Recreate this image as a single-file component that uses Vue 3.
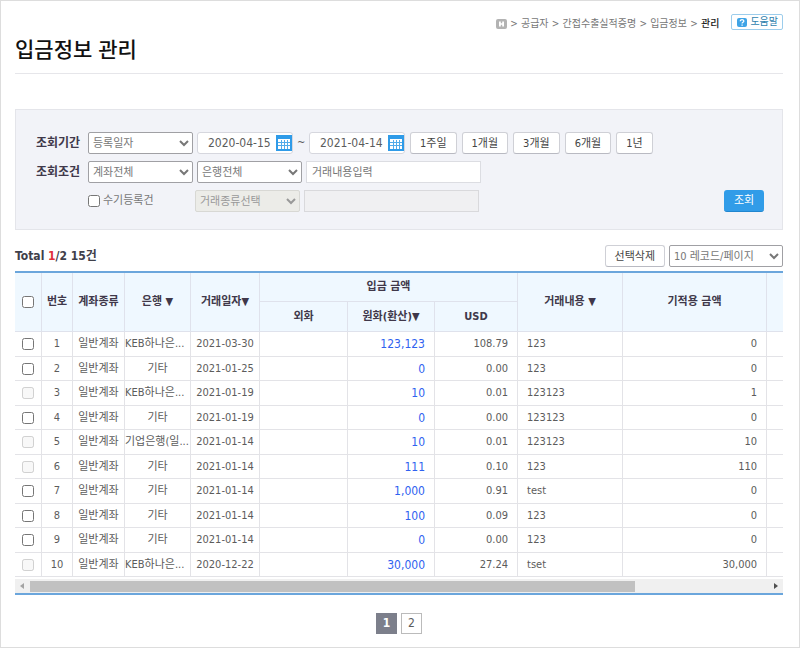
<script setup>
import { ref } from 'vue'

const crumbs = ['공급자', '간접수출실적증명', '입금정보']
const periods = ['1주일', '1개월', '3개월', '6개월', '1년']
const from = ref('2020-04-15')
const to = ref('2021-04-14')
const keyword = ref('')
const thumb = 82

const rows = [
  { no: 1, bank: 'KEB하나은...', date: '2021-03-30', krw: '123,123', usd: '108.79', memo: '123', used: '0' },
  { no: 2, bank: '기타', date: '2021-01-25', krw: '0', usd: '0.00', memo: '123', used: '0' },
  { no: 3, bank: 'KEB하나은...', date: '2021-01-19', krw: '10', usd: '0.01', memo: '123123', used: '1', locked: true },
  { no: 4, bank: '기타', date: '2021-01-19', krw: '0', usd: '0.00', memo: '123123', used: '0' },
  { no: 5, bank: '기업은행(일...', date: '2021-01-14', krw: '10', usd: '0.01', memo: '123123', used: '10', locked: true },
  { no: 6, bank: '기타', date: '2021-01-14', krw: '111', usd: '0.10', memo: '123', used: '110', locked: true },
  { no: 7, bank: '기타', date: '2021-01-14', krw: '1,000', usd: '0.91', memo: 'test', used: '0' },
  { no: 8, bank: '기타', date: '2021-01-14', krw: '100', usd: '0.09', memo: '123', used: '0' },
  { no: 9, bank: '기타', date: '2021-01-14', krw: '0', usd: '0.00', memo: '123', used: '0' },
  { no: 10, bank: 'KEB하나은...', date: '2020-12-22', krw: '30,000', usd: '27.24', memo: 'tset', used: '30,000', locked: true },
]
</script>

<template>
  <main class="page">
    <header class="head">
      <div class="top">
        <nav class="crumbs" aria-label="breadcrumb">
          <a href="#" class="home" aria-label="홈">
            <svg width="11" height="10" viewBox="0 0 11 10"><rect width="11" height="10" rx="2" fill="#b3b3b3" /><path d="M3 2.500h1.800v1.700h1.400V2.500H8v5H6.200V5.800H4.800v1.700H3z" fill="#fff" /></svg>
          </a>
          <span>&gt;</span>
          <template v-for="c in crumbs" :key="c"><a href="#">{{ c }}</a><span>&gt;</span></template>
          <strong>관리</strong>
        </nav>
        <button class="help" type="button">
          <svg width="10" height="9" viewBox="0 0 10 9"><rect width="10" height="9" rx="2" fill="#3fa4e6" /><path d="M3.300 3.200c0-2 3.500-2 3.500 0 0 1.100-1.700 1-1.700 2.300M5.100 6.500v1.200" stroke="#fff" stroke-width="1.300" fill="none" /></svg>
          도움말
        </button>
      </div>
      <h1>입금정보 관리</h1>
    </header>

    <form class="filter" @submit.prevent>
      <div class="line">
        <label class="name" for="dateType">조회기간</label>
        <select id="dateType" class="sel"><option>등록일자</option></select>
        <span class="date">
          <input v-model="from" type="text" aria-label="시작일">
          <button type="button" aria-label="시작일 달력">
            <svg width="16" height="16" viewBox="0 0 16 16"><rect width="16" height="16" fill="#2f9be8" /><path d="M2 4h12v10H2z" fill="#fff" /><path d="M2 7.500h12M2 10.500h12M5.500 5v9M8.500 5v9M11.500 5v9" stroke="#52abe9" /></svg>
          </button>
        </span>
        <span class="tilde">~</span>
        <span class="date">
          <input v-model="to" type="text" aria-label="종료일">
          <button type="button" aria-label="종료일 달력">
            <svg width="16" height="16" viewBox="0 0 16 16"><rect width="16" height="16" fill="#2f9be8" /><path d="M2 4h12v10H2z" fill="#fff" /><path d="M2 7.500h12M2 10.500h12M5.500 5v9M8.500 5v9M11.500 5v9" stroke="#52abe9" /></svg>
          </button>
        </span>
        <div class="periods">
          <button v-for="p in periods" :key="p" type="button" class="btn">{{ p }}</button>
        </div>
      </div>
      <div class="line">
        <label class="name" for="account">조회조건</label>
        <select id="account" class="sel"><option>계좌전체</option></select>
        <select class="sel" aria-label="은행"><option>은행전체</option></select>
        <input v-model="keyword" class="text" type="text" placeholder="거래내용입력" aria-label="거래내용">
      </div>
      <div class="line">
        <span class="name"></span>
        <label class="manual"><input type="checkbox">수기등록건</label>
        <select class="sel" aria-label="거래종류" disabled><option>거래종류선택</option></select>
        <input class="text" type="text" aria-label="거래종류 상세" disabled>
        <button class="search" type="submit">조회</button>
      </div>
    </form>

    <div class="tools">
      <p>Total <em>1</em>/2 15건</p>
      <button type="button" class="btn">선택삭제</button>
      <select class="size" aria-label="페이지 크기"><option>10 레코드/페이지</option></select>
    </div>

    <section class="grid">
      <div class="view">
        <table>
          <colgroup>
            <col class="w27"><col class="w31"><col class="w52"><col class="w66"><col class="w69">
            <col class="w88"><col class="w87"><col class="w83"><col class="w105"><col class="w144"><col>
          </colgroup>
          <thead>
            <tr>
              <th rowspan="2"><input type="checkbox" aria-label="전체 선택"></th>
              <th rowspan="2">번호</th>
              <th rowspan="2">계좌종류</th>
              <th rowspan="2">은행 ▼</th>
              <th rowspan="2">거래일자▼</th>
              <th colspan="3" class="group">입금 금액</th>
              <th rowspan="2">거래내용 ▼</th>
              <th rowspan="2">기적용 금액</th>
              <th rowspan="2"></th>
            </tr>
            <tr><th>외화</th><th>원화(환산)▼</th><th>USD</th></tr>
          </thead>
          <tbody>
            <tr v-for="r in rows" :key="r.no">
              <td><input type="checkbox" :disabled="r.locked" :aria-label="r.no + '번 선택'"></td>
              <td>{{ r.no }}</td>
              <td>일반계좌</td>
              <td :class="{ long: r.bank.length > 2 }">{{ r.bank }}</td>
              <td>{{ r.date }}</td>
              <td></td>
              <td class="krw">{{ r.krw }}</td>
              <td class="num">{{ r.usd }}</td>
              <td class="memo">{{ r.memo }}</td>
              <td class="num">{{ r.used }}</td>
              <td></td>
            </tr>
          </tbody>
        </table>
      </div>
      <div class="scroll">
        <svg width="15" height="12" viewBox="0 0 15 12"><path d="M9 3v6L5 6z" fill="#a3a3a3" /></svg>
        <div class="track"><div class="thumb" :style="{ width: thumb + '%' }"></div></div>
        <svg width="15" height="12" viewBox="0 0 15 12"><path d="M6 3v6l4-3z" fill="#505050" /></svg>
      </div>
    </section>

    <nav class="pager" aria-label="페이지">
      <a href="#" class="on" aria-current="page">1</a>
      <a href="#">2</a>
    </nav>
  </main>
</template>

<style>
body { background: #fff; }
</style>

<style scoped>
* { box-sizing: border-box; }
.page {
  min-height: 100vh;
  padding: 13px 16px 12px 14px;
  border: 1px solid #ddd;
  font: 11px/16px "DejaVu Sans Condensed", "Noto Sans", "Noto Sans CJK KR", sans-serif;
  color: #5c5c5c;
}
button, input, select { font: inherit; color: inherit; margin: 0; }
button { padding: 0; cursor: pointer; }
a { color: inherit; text-decoration: none; }
svg { display: block; flex: none; }

.head { border-bottom: 1px solid #e6e6ea; padding-bottom: 3px; }
.top { display: flex; justify-content: flex-end; align-items: flex-start; gap: 12px; height: 16px; }
.crumbs { display: flex; align-items: center; gap: 2px; padding-top: 2px; color: #777; font-size: 10px; white-space: nowrap; }
.crumbs span { width: 10px; text-align: center; }
.crumbs strong { color: #222; font-weight: 500; }
.help {
  display: flex; align-items: center; gap: 3px; height: 16px; padding: 0 4px 0 5px;
  border: 1px solid #9ccdec; border-radius: 2px; background: #fff; color: #2f7fae;
  font-size: 10px; line-height: 14px; white-space: nowrap;
}
h1 { margin: 0; font-size: 21px; line-height: 40px; font-weight: 500; color: #111; }

.filter {
  display: flex; flex-direction: column; gap: 7px; margin-top: 35px;
  padding: 22px 18px 17px 20px; border: 1px solid #e4e5ea; background: #f2f3f8;
}
.line { display: flex; align-items: center; gap: 4px; height: 22px; white-space: nowrap; }
.name { width: 48px; font-size: 12px; font-weight: 700; color: #40384a; }
.sel, .size { height: 22px; border: 1px solid #a0a0a4; border-radius: 2px; background-color: #fff; color: #777; }
.sel { width: 105px; }
.sel:disabled { border-color: #d8d8d4; background-color: #ecece8; color: #999; opacity: 1; }
.date {
  display: flex; align-items: center; width: 96px; height: 22px; padding-left: 10px;
  border: 1px solid #d6d7de; border-radius: 3px; background: #fff;
}
.date input { flex: 1; min-width: 0; padding: 0; border: 0; background: none; outline: 0; font-size: 12px; }
.date button { border: 0; background: none; }
.tilde { width: 8px; text-align: center; }
.periods { display: flex; gap: 5px; margin-left: 1px; }
.btn {
  height: 22px; padding: 1px 9px 0; border: 1px solid #cfd0d6; border-bottom-color: #b9bac2;
  border-radius: 3px; background: #fff; color: #444;
}
.text { width: 175px; height: 22px; padding: 0 5px; border: 1px solid #dcdde2; background: #fff; }
.text::placeholder { color: #777; opacity: 1; }
.text:disabled { border-color: #d9d9dc; background: #f0f0f2; }
.manual { display: flex; align-items: center; gap: 3px; width: 103px; color: #777; }
input[type="checkbox"] { width: 12px; height: 12px; margin: 0; }
.search {
  width: 40px; height: 22px; padding-top: 1px; margin-left: auto; border: 0; border-bottom: 1px solid #2186cf;
  border-radius: 3px; background: #319ce8; color: #fff;
}

.tools { display: flex; align-items: center; gap: 4px; height: 22px; margin: 15px 0 4px; }
.tools p { margin: 0 auto 0 0; font-size: 12px; font-weight: 700; color: #40404a; }
.tools em { font-style: normal; color: #e0303a; }
.size { width: 114px; }

.grid { border-top: 2px solid #6ba6dc; border-bottom: 2px solid #6ba6dc; }
.view { overflow: hidden; }
table { width: 940px; table-layout: fixed; border-collapse: separate; border-spacing: 0; }
th, td {
  height: 24px; padding: 0; border-right: 1px solid #e3e3e7; border-bottom: 1px solid #e3e3e7;
  text-align: center; white-space: nowrap; overflow: hidden;
}
tbody tr:nth-child(odd) td { height: 25px; }
th { height: 30px; background: #eff8ff; color: #40384a; font-weight: 700; border-color: #dfe2ec; }
.group { height: 29px; }
th input, td input { display: block; }
th input[type="checkbox"], td input[type="checkbox"] { margin: 0 auto; }
.num, .krw { padding-right: 9px; text-align: right; }
.krw { font-size: 12px; color: #2f62f0; }
.memo { padding-left: 9px; text-align: left; }
.long { text-align: left; }
.w27 { width: 27px; }
.w31 { width: 31px; }
.w52 { width: 52px; }
.w66 { width: 66px; }
.w69 { width: 69px; }
.w87 { width: 87px; }
.w88 { width: 88px; }
.w83 { width: 83px; }
.w105 { width: 105px; }
.w144 { width: 144px; }

.scroll { display: flex; align-items: center; height: 14px; margin-top: 2px; background: #f0f0f0; }
.track { flex: 1; }
.thumb { height: 11px; background: #c1c1c1; }

.pager { display: flex; justify-content: center; gap: 4px; margin-top: 18px; }
.pager a {
  width: 21px; height: 21px; border: 1px solid #bbb; font-size: 12px; line-height: 19px; text-align: center;
}
.pager .on { border-color: #7c7f8b; background: #7c7f8b; color: #fff; font-weight: 700; }
</style>
